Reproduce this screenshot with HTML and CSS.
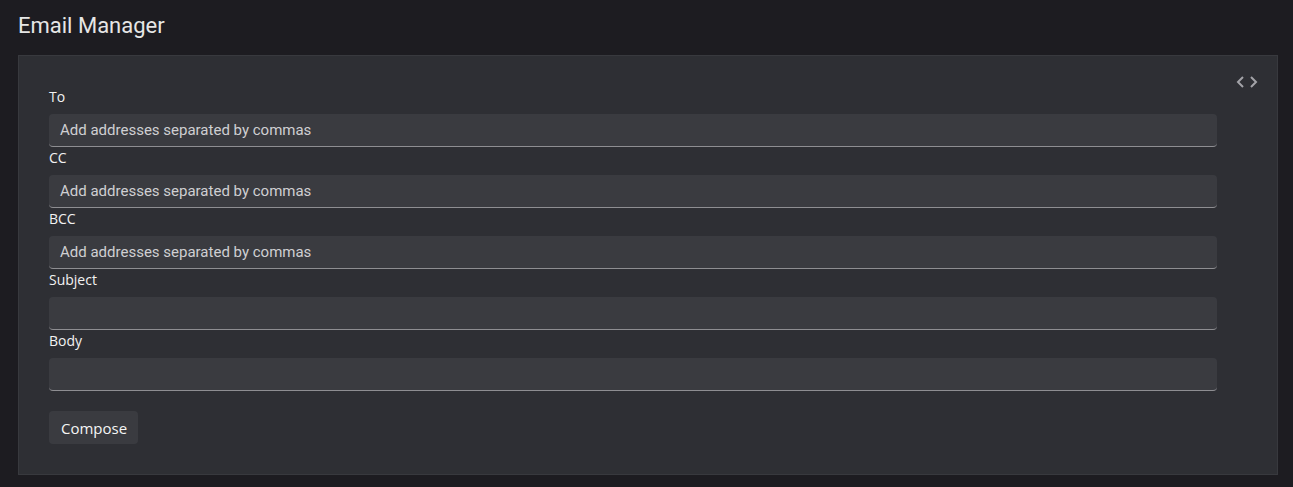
FILE: index.html
```html
<!DOCTYPE html>
<html>
<head>
<meta charset="utf-8">
<link rel="stylesheet" href="styles.css">
</head>
<body>
<h1 class="title">Email Manager</h1>
<div class="panel">
  <div class="code-toggle">
    <svg width="22" height="14" viewBox="0 0 22 14"><path d="M7 2 L2 7 L7 12" fill="none" stroke="#a3a3a8" stroke-width="2"/><path d="M15 2 L20 7 L15 12" fill="none" stroke="#a3a3a8" stroke-width="2"/></svg>
  </div>
  <form class="form">
    <label class="label">To</label>
    <div class="input"><span class="ph">Add addresses separated by commas</span></div>
    <label class="label">CC</label>
    <div class="input"><span class="ph">Add addresses separated by commas</span></div>
    <label class="label">BCC</label>
    <div class="input"><span class="ph">Add addresses separated by commas</span></div>
    <label class="label">Subject</label>
    <div class="input"></div>
    <label class="label">Body</label>
    <div class="input"></div>
    <div class="actions"><button type="button" class="btn">Compose</button></div>
  </form>
</div>
</body>
</html>
```

FILE: styles.css
```css
html, body {
  margin: 0;
  padding: 0;
  background: #1d1c21;
}
body {
  padding: 0 15px 0 18px;
  font-family: "Open Sans", "Noto Sans", sans-serif;
  color: #f0f0f0;
}
.title {
  margin: 0;
  padding-top: 13px;
  height: 55px;
  box-sizing: border-box;
  font-family: Roboto, "Liberation Sans", sans-serif;
  font-weight: 400;
  font-size: 22px;
  line-height: 26px;
  color: #e6e6e6;
}
.panel {
  position: relative;
  background: #2e2f34;
  border: 1px solid #38393e;
  padding: 30px 60px 30px 30px;
  height: 420px;
  box-sizing: border-box;
}
.code-toggle {
  position: absolute;
  top: 19px;
  right: 19px;
  display: flex;
}
.form {
  display: flex;
  flex-direction: column;
}
.label {
  display: block;
  font-size: 14px;
  line-height: 20px;
  padding-top: 1px;
  margin-bottom: 7px;
  color: #f2f2f2;
}
.input {
  height: 33px;
  box-sizing: border-box;
  background: #3a3b40;
  border-radius: 4px;
  border-bottom: 1px solid #8e8e92;
  padding: 0 11px;
  display: flex;
  align-items: center;
  font-family: Roboto, "Liberation Sans", sans-serif;
  font-size: 15px;
}
.ph {
  color: #cfcfd2;
}
.actions {
  margin-top: 20px;
}
.btn {
  background: #3a3b40;
  border: none;
  border-radius: 4px;
  color: #f5f5f5;
  font-family: "Open Sans", "Noto Sans", sans-serif;
  font-size: 15px;
  height: 33px;
  padding: 0 11px 0 12px;
}
```
